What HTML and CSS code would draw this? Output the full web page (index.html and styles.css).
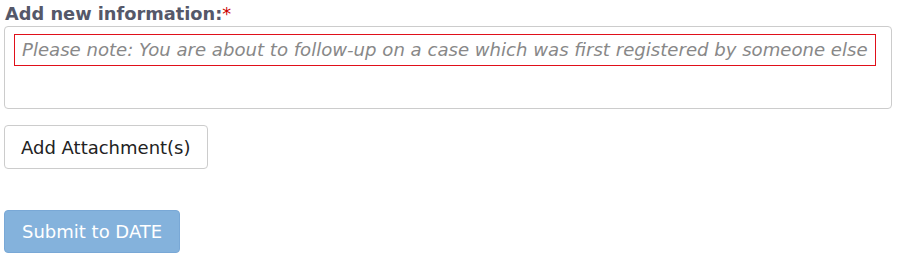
FILE: index.html
```
<!DOCTYPE html>
<html>
<head>
  <title>Add new information</title>
  <link rel="stylesheet" href="styles.css">
</head>
<body>
  <form class="followup-form">
    <label class="field-label" for="info">Add new information:<span class="required">*</span></label>
    <div class="text-box">
      <div class="note">Please note: You are about to follow-up on a case which was first registered by someone else</div>
    </div>
    <button type="button" class="btn btn-default">Add Attachment(s)</button>
    <button type="button" class="btn btn-primary" disabled>Submit to DATE</button>
  </form>
</body>
</html>
```

FILE: styles.css
```
body {
  margin: 0;
  font-family: "DejaVu Sans", Verdana, sans-serif;
  background: #fff;
}

.followup-form {
  padding: 2px 8px 0 4px;
  display: flex;
  flex-direction: column;
  align-items: flex-start;
}

.field-label {
  font-size: 17.8px;
  font-weight: bold;
  color: #555869;
  margin-left: 1px;
  line-height: 24px;
}

.required {
  color: #c00;
  font-weight: normal;
}

.text-box {
  align-self: stretch;
  box-sizing: border-box;
  height: 83px;
  border: 1px solid #ccc;
  border-radius: 4px;
  padding: 7px 15px 0 9px;
}

.note {
  border: 1px solid #e0101a;
  font-style: italic;
  font-size: 18.1px;
  color: #888;
  padding: 4px 7px;
  line-height: 22px;
  white-space: nowrap;
}

.btn {
  font-family: "DejaVu Sans", Verdana, sans-serif;
  font-size: 18px;
  border-radius: 4px;
  padding: 0 16px;
  height: 44px;
}

.btn-default {
  margin-top: 16px;
  background: #fff;
  border: 1px solid #ccc;
  color: #222;
}

.btn-primary {
  margin-top: 41px;
  padding: 0 17px 0 17px;
  background: #84b2dc;
  border: 1px solid #79a8d6;
  color: #fff;
  height: 43px;
}
```
